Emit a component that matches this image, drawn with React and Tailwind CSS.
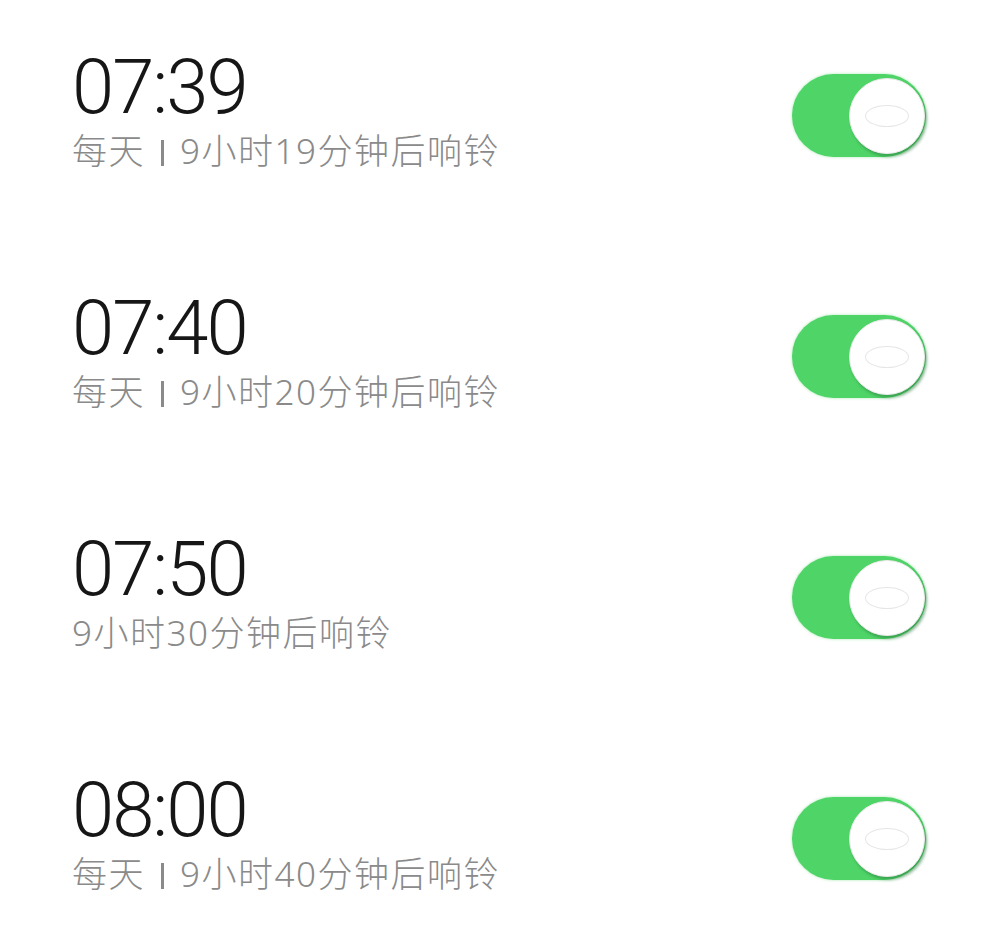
const alarms = [
  { time: '07:39', repeat: '每天', remain: '9小时19分钟后响铃' },
  { time: '07:40', repeat: '每天', remain: '9小时20分钟后响铃' },
  { time: '07:50', repeat: '', remain: '9小时30分钟后响铃' },
  { time: '08:00', repeat: '每天', remain: '9小时40分钟后响铃' },
];

const Toggle = () => (
  <div className="relative shrink-0 w-[134px] h-[83px] rounded-full bg-[#4fd468] shadow-[0_0_3px_rgba(80,210,100,0.5)]">
    <div className="absolute right-[1px] top-[4px] w-[76px] h-[76px] rounded-full bg-white border border-[#eaeaea] shadow-[2px_3px_3px_rgba(30,110,50,0.45)] flex items-center justify-center">
      <div className="w-[44px] h-[22px] rounded-[50%] border border-[#e6e6e6]" />
    </div>
  </div>
);

const App = () => {
  return (
    <div
      className="w-[1000px] h-[929px] bg-white overflow-hidden pl-[72px] pr-[74px] flex flex-col gap-[11px]"
      style={{ fontFamily: '"Noto Sans", "Noto Sans CJK SC", sans-serif' }}
    >
      {alarms.map((a) => (
        <div key={a.time} className="shrink-0 h-[230px] flex items-center justify-between">
          <div className="flex flex-col pb-[18px]">
            <span
              className="mt-[4px] text-[76px] font-light leading-none text-[#161616] tracking-[-2px]"
              style={{ fontFamily: 'Roboto, "Noto Sans", sans-serif' }}
            >
              {a.time}
            </span>
            <span className="mt-[8px] text-[35px] font-light leading-none text-[#8a8a8a] tracking-[1.5px]">
              {a.repeat && (
                <>
                  {a.repeat}
                  <span className="inline-block mx-[16px] w-[3px] h-[26px] bg-[#8a8a8a] align-[-2px]" />
                </>
              )}
              {a.remain}
            </span>
          </div>
          <Toggle />
        </div>
      ))}
    </div>
  );
};

export default App;
